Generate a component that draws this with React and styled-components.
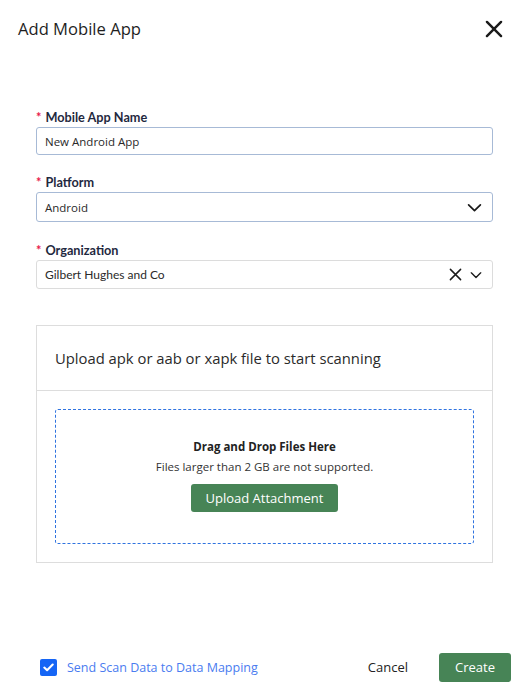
import styled, { createGlobalStyle } from "styled-components";

const GlobalStyle = createGlobalStyle`
  html, body {
    margin: 0;
    padding: 0;
    background: #ffffff;
  }
  body {
    font-family: "Open Sans", "Noto Sans", sans-serif;
    color: #222;
  }
  * { box-sizing: border-box; }
`;

const Modal = styled.div`
  width: 526px;
  height: 699px;
  display: flex;
  flex-direction: column;
  background: #fff;
`;

const Header = styled.header`
  height: 57px;
  display: flex;
  align-items: center;
  justify-content: space-between;
  padding: 0 20px 0 18px;
`;

const Title = styled.h2`
  margin: 0;
  font-size: 16.6px;
  font-weight: 500;
  color: #1e1e1e;
`;

const CloseButton = styled.button`
  width: 24px;
  height: 24px;
  padding: 0;
  border: none;
  background: transparent;
  display: flex;
  align-items: center;
  justify-content: center;
  cursor: pointer;
`;

const Body = styled.div`
  flex: 1;
  padding: 52px 33px 0 36px;
  display: flex;
  flex-direction: column;
`;

const Field = styled.div`
  display: flex;
  flex-direction: column;
  margin-bottom: ${(p) => p.$gap || 19}px;
`;

const Label = styled.label`
  font-family: "Lato", "Noto Sans", sans-serif;
  font-size: 12.7px;
  font-weight: 700;
  color: #1f2940;
  height: 16px;
  line-height: 16px;
  margin-bottom: 2px;
`;

const Required = styled.span`
  color: #e8174a;
  margin-right: 4px;
`;

const Input = styled.div`
  height: ${(p) => p.$h || 28}px;
  border: 1px solid ${(p) => (p.$muted ? "#dcdcdc" : "#a7bad6")};
  border-radius: 3px;
  display: flex;
  align-items: center;
  padding: 0 10px 0 8px;
  font-family: ${(p) =>
    p.$lato ? '"Lato", "Noto Sans", sans-serif' : '"Open Sans", sans-serif'};
  font-size: ${(p) => (p.$lato ? 12 : 11.5)}px;
  color: #2a2a2a;
`;

const Value = styled.span`
  flex: 1;
`;

const Icons = styled.div`
  display: flex;
  align-items: center;
  gap: 8px;
`;

const UploadCard = styled.section`
  margin-top: 19px;
  border: 1px solid #dddddd;
  height: 238px;
  display: flex;
  flex-direction: column;
`;

const UploadHead = styled.div`
  height: 65px;
  border-bottom: 1px solid #dddddd;
  display: flex;
  align-items: center;
  padding-left: 18px;
  font-size: 14.8px;
  font-weight: 500;
  color: #2a2a2a;
`;

const UploadBody = styled.div`
  padding: 18px;
`;

const DropZone = styled.div`
  height: 135px;
  border: 1px dashed #2f73e0;
  border-radius: 3px;
  display: flex;
  flex-direction: column;
  align-items: center;
  justify-content: center;
  padding-bottom: 2px;
`;

const DropTitle = styled.div`
  font-size: 11.5px;
  font-weight: 700;
  color: #222;
  margin-bottom: 5px;
`;

const DropHint = styled.div`
  font-size: 11.5px;
  color: #333;
  margin-bottom: 10px;
`;

const GreenButton = styled.button`
  height: ${(p) => p.$h || 28}px;
  padding: 0 ${(p) => p.$px || 15}px;
  background: #478456;
  color: #fff;
  border: none;
  border-radius: 3px;
  font-family: "Open Sans", sans-serif;
  font-size: 13px;
  font-weight: 500;
  cursor: pointer;
`;

const Footer = styled.footer`
  height: 58px;
  margin-bottom: 3px;
  display: flex;
  align-items: center;
  padding: 0 15px 0 40px;
`;

const CheckRow = styled.label`
  display: flex;
  align-items: center;
  gap: 10px;
  flex: 1;
  font-size: 12.5px;
  color: #4a7cf0;
`;

const CheckBox = styled.span`
  width: 17px;
  height: 17px;
  background: #1565f5;
  border-radius: 2px;
  display: flex;
  align-items: center;
  justify-content: center;
`;

const CancelButton = styled.button`
  background: transparent;
  border: none;
  font-family: "Open Sans", sans-serif;
  font-size: 13px;
  font-weight: 500;
  color: #222;
  margin-right: 25px;
  cursor: pointer;
`;

const Chevron = ({ size = 14, stroke = 1.6 }) => (
  <svg width={size} height={size} viewBox="0 0 14 14" fill="none">
    <path
      d="M1.5 4.5 L7 10 L12.5 4.5"
      stroke="#1a1a1a"
      strokeWidth={stroke}
      strokeLinecap="round"
      strokeLinejoin="round"
    />
  </svg>
);

const Cross = ({ size = 14, stroke = 1.6 }) => (
  <svg width={size} height={size} viewBox="0 0 14 14" fill="none">
    <path
      d="M1.5 1.5 L12.5 12.5 M12.5 1.5 L1.5 12.5"
      stroke="#1a1a1a"
      strokeWidth={stroke}
      strokeLinecap="round"
    />
  </svg>
);

const App = () => {
  return (
    <>
      <GlobalStyle />
      <Modal>
        <Header>
          <Title>Add Mobile App</Title>
          <CloseButton aria-label="Close">
            <Cross size={18} stroke={1.9} />
          </CloseButton>
        </Header>

        <Body>
          <Field $gap={19}>
            <Label>
              <Required>*</Required>Mobile App Name
            </Label>
            <Input>
              <Value>New Android App</Value>
            </Input>
          </Field>

          <Field $gap={20}>
            <Label>
              <Required>*</Required>Platform
            </Label>
            <Input $h={30}>
              <Value>Android</Value>
              <Chevron size={15} />
            </Input>
          </Field>

          <Field $gap={17}>
            <Label>
              <Required>*</Required>Organization
            </Label>
            <Input $h={29} $muted $lato>
              <Value>Gilbert Hughes and Co</Value>
              <Icons>
                <Cross size={13} />
                <Chevron size={12} />
              </Icons>
            </Input>
          </Field>

          <UploadCard>
            <UploadHead>Upload apk or aab or xapk file to start scanning</UploadHead>
            <UploadBody>
              <DropZone>
                <DropTitle>Drag and Drop Files Here</DropTitle>
                <DropHint>Files larger than 2 GB are not supported.</DropHint>
                <GreenButton>Upload Attachment</GreenButton>
              </DropZone>
            </UploadBody>
          </UploadCard>
        </Body>

        <Footer>
          <CheckRow>
            <CheckBox>
              <svg width="11" height="9" viewBox="0 0 11 9" fill="none">
                <path
                  d="M1.3 4.6 L4.1 7.2 L9.7 1.6"
                  stroke="#fff"
                  strokeWidth="2.1"
                  strokeLinecap="round"
                  strokeLinejoin="round"
                />
              </svg>
            </CheckBox>
            Send Scan Data to Data Mapping
          </CheckRow>
          <CancelButton>Cancel</CancelButton>
          <GreenButton $h={29} $px={16}>Create</GreenButton>
        </Footer>
      </Modal>
    </>
  );
};

export default App;
